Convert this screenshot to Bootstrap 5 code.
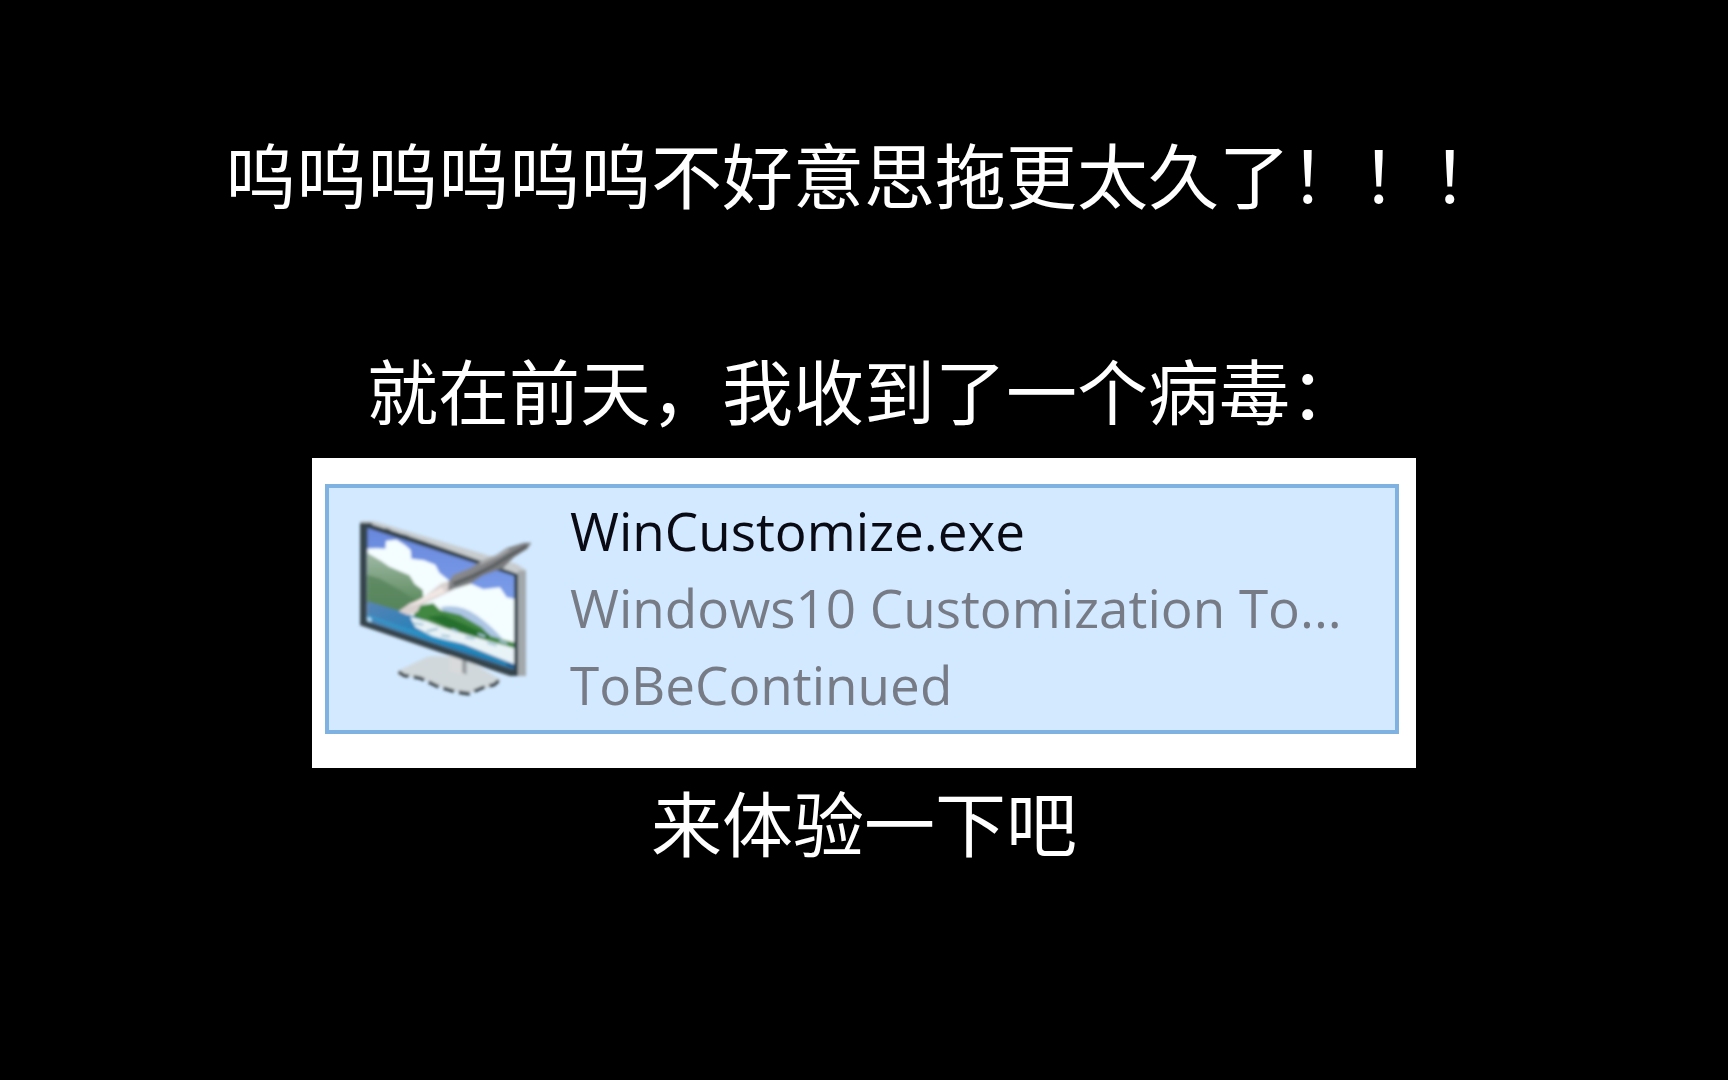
<!DOCTYPE html>
<html lang="zh-CN">
<head>
<meta charset="utf-8">
<meta name="viewport" content="width=device-width, initial-scale=1">
<title>WinCustomize.exe</title>
<link href="https://cdn.jsdelivr.net/npm/bootstrap@5.3.0/dist/css/bootstrap.min.css" rel="stylesheet">
<style>
body{background:#000;color:#fff;font-family:"Noto Sans CJK SC",sans-serif}
.slide{padding-top:122px}
.caption-line{font-size:71px;line-height:100px;font-weight:400;margin:0}
.caption-gap{margin-bottom:116px}
.shot{max-width:1104px;margin:20px 0 2px;padding:26px 17px 34px 13px;background:#fff}
.file-tile{background:#d2e9ff;border:4px solid #7fb2e1;padding:4px 26px 7px 27px;gap:34px;font-family:"Open Sans","Noto Sans",sans-serif;font-size:53px;line-height:77px;color:#777b86}
.file-title{color:#0a0a14}
.file-icon{width:180px;height:184px}
</style>
</head>
<body>
<main class="slide container-fluid d-flex flex-column align-items-center text-center">
<h1 class="caption-line caption-gap">呜呜呜呜呜呜不好意思拖更太久了！！！</h1>
<p class="caption-line">就在前天，我收到了一个病毒：</p>
<section class="shot w-100">
<div class="file-tile d-flex align-items-center text-start">
<svg class="file-icon flex-shrink-0" viewBox="48 48 540 552" aria-hidden="true">
<defs>
<linearGradient id="sky" x1="0" y1="0" x2="0" y2="1"><stop offset="0" stop-color="#6685dc"/><stop offset="1" stop-color="#8fb4f4"/></linearGradient>
<linearGradient id="sea" x1="0" y1="0" x2="1" y2="1"><stop offset="0" stop-color="#5a83b5"/><stop offset=".5" stop-color="#1780ba"/><stop offset="1" stop-color="#07588f"/></linearGradient>
<linearGradient id="hill" x1="0" y1="0" x2="0" y2="1"><stop offset="0" stop-color="#a3bba9"/><stop offset="1" stop-color="#4f8250"/></linearGradient>
<linearGradient id="pen" x1="0" y1="0" x2="1" y2="1"><stop offset="0" stop-color="#b0b0b2"/><stop offset=".5" stop-color="#7e8083"/><stop offset="1" stop-color="#55585c"/></linearGradient>
<clipPath id="scr"><path d="M82 84L522 228V508L82 362Z"/></clipPath>
<filter id="soft"><feGaussianBlur stdDeviation="4"/></filter>
</defs>
<g filter="url(#soft)">
<path d="M174 512L262 470Q330 462 400 490L484 540L458 560L378 582L318 568L240 534L176 528Z" fill="#d0d8dc"/>
<path d="M176 516L192 526L240 534L290 558L345 575L385 581L425 564L462 554L480 538" fill="none" stroke="#303b41" stroke-width="10" stroke-dasharray="34 14"/>
<path d="M328 460H378V526L328 512Z" fill="#d8dadb"/><path d="M366 470H380V524L366 518Z" fill="#989da0"/>
<path d="M62 64H104L530 192L558 210V528H510L60 376Z" fill="#c7cbcd"/>
<path d="M534 212H558V528H534Z" fill="#a2a8ab"/>
<path d="M60 68H92L534 222V528H510L60 376Z" fill="#36444d"/>
<path d="M98 68L526 204" fill="none" stroke="#c8cdd0" stroke-width="11" stroke-dasharray="42 16"/>
<g clip-path="url(#scr)">
<path d="M70 60H540V530H70Z" fill="url(#sky)"/>
<path d="M70 146L112 145L136 146L138 122L170 119L196 136L212 150L214 176L252 181L286 194L298 218L325 240L350 264L390 250L430 268L480 262L500 292L540 300V530H70Z" fill="#f4fdff"/>
<path d="M300 322Q360 310 410 346T490 420L440 410L350 370Z" fill="#abc5e3"/>
<path d="M70 152L122 182L148 200L208 226L224 252L248 270L252 310L200 338L70 310Z" fill="url(#hill)"/>
<path d="M80 224L120 236L180 270L240 310L190 334L70 304Z" fill="#57855d" opacity=".8"/>
<path d="M230 318L280 310L300 330L360 344L425 382L450 408L530 430V470L400 418L310 388L220 350Z" fill="#438843"/>
<path d="M260 350L310 345L400 385L450 405L440 420L330 385Z" fill="#28702f"/>
<path d="M70 300L180 334L225 350L300 382L530 466V530H70Z" fill="url(#sea)"/>
<path d="M210 350L262 364L314 384L386 406L530 446V496L454 466L370 432L280 410L226 382Z" fill="#e8f3f7"/>
<path d="M220 370l30 4m10 20l34-8m10 20l26 4m4-22l20 8m22 16l28 4m10-14l22 8m6 18l28 8m8-14l24 8" stroke="#a5c5d7" stroke-width="7"/>
<path d="M80 346L170 380L300 420L410 458L500 492" fill="none" stroke="#31a0cf" stroke-width="9" opacity=".65"/>
<path d="M80 350l14 5v16l-14-5z" fill="#b8e4ff"/>
</g>
<path d="M176 334L210 310L244 298L304 250L330 242L340 270L242 316L232 336L204 346Z" fill="#d9d1d0"/>
<path d="M202 318L304 262L316 276L240 310Z" fill="#f2e8e5"/>
<path d="M326 244L340 224L390 204L430 180L470 164L500 144L552 128H574L562 146L522 172L490 204L430 226L390 252L324 272Z" fill="url(#pen)"/>
<path d="M340 252L400 228L462 196L510 166L560 138" fill="none" stroke="#5c5e61" stroke-width="11"/>
<path d="M420 190L480 164L506 148" fill="none" stroke="#aaacad" stroke-width="7"/>
</g>
</svg>
<div class="flex-grow-1 overflow-hidden">
<div class="file-title text-truncate">WinCustomize.exe</div>
<div class="text-truncate">Windows10 Customization To...</div>
<div class="text-truncate">ToBeContinued</div>
</div>
</div>
</section>
<p class="caption-line">来体验一下吧</p>
</main>
<script src="https://cdn.jsdelivr.net/npm/bootstrap@5.3.0/dist/js/bootstrap.bundle.min.js"></script>
</body>
</html>
